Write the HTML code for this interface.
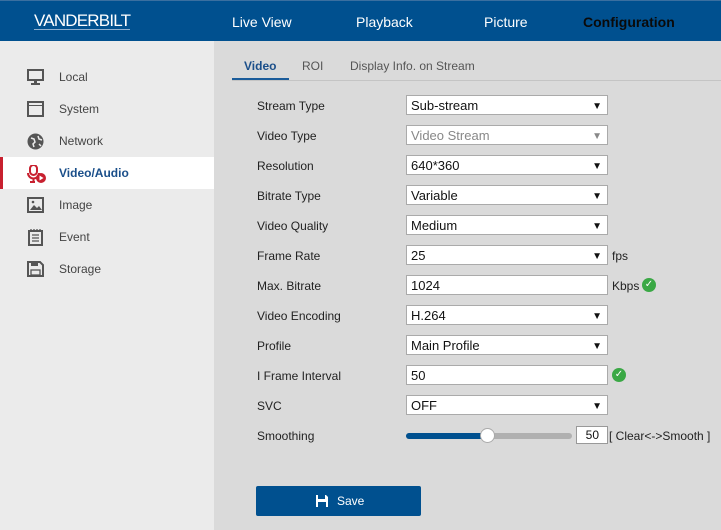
<!DOCTYPE html><html><head><style>
*{box-sizing:border-box;margin:0;padding:0}
body{width:721px;height:530px;overflow:hidden;font-family:"Liberation Sans",sans-serif;background:#dadada;position:relative;font-size:12px;color:#333}
.hdr{position:absolute;left:0;top:0;width:721px;height:41px;background:#00508f;border-top:1px solid #3a6fa0}
.logo{position:absolute;left:34px;top:11px;color:#fff;font-size:17px;letter-spacing:-0.8px;border-bottom:1px solid #8fb0d0;line-height:17px}
.nav{position:absolute;top:13px;color:#fff;font-size:14px}
.side{position:absolute;left:0;top:41px;width:214px;height:489px;background:#ebebeb}
.item{position:absolute;left:0;width:214px;height:32px;line-height:32px;padding-left:59px;font-size:12px;color:#444}
.item svg{position:absolute;left:27px;top:8px}
.act{background:#fff;color:#1b4f8a;font-weight:bold;border-left:3px solid #c8202f;padding-left:56px}
.act svg{left:24px}
.tabs{position:absolute;left:232px;top:80px;width:489px;border-top:1px solid #c4c4c4}
.tab{position:absolute;top:59px;font-size:12px;color:#555}
.lbl{position:absolute;left:257px;font-size:12px;color:#222}
.box{position:absolute;left:406px;width:202px;height:20px;background:#fff;border:1px solid #aaa;font-size:13px;line-height:20px;padding-left:4px;color:#111}
.box .ar{position:absolute;right:5px;top:1px;font-size:10px}
.unit{position:absolute;left:612px;font-size:12px;color:#222}
.ok{position:absolute;width:14px;height:14px;border-radius:50%;background:#3aa845;color:#fff;font-size:10px;line-height:14px;text-align:center}
</style></head><body>
<div class="hdr"><div class="logo">VANDERBILT</div>
<div class="nav" style="left:232px">Live View</div><div class="nav" style="left:356px">Playback</div><div class="nav" style="left:484px">Picture</div><div class="nav" style="left:583px;font-weight:bold;color:#0a0a0a">Configuration</div></div>
<div class="side">
<div class="item" style="top:20px"><svg width="17" height="16"><rect x="1" y="1" width="15" height="10" fill="none" stroke="#555" stroke-width="2"/><rect x="7" y="11" width="3" height="3" fill="#555"/><rect x="4" y="14" width="9" height="2" fill="#555"/></svg>Local</div>
<div class="item" style="top:52px"><svg width="17" height="16"><rect x="1" y="1" width="15" height="14" fill="none" stroke="#555" stroke-width="2"/><rect x="1" y="4" width="15" height="1" fill="#555"/></svg>System</div>
<div class="item" style="top:84px"><svg width="17" height="17"><circle cx="8.5" cy="8.5" r="8" fill="#555"/><path d="M4 5l3 1 1 3-2 2 1 3M11 3l1 3 3 1M12 11l2 2" stroke="#ebebeb" stroke-width="1.5" fill="none"/></svg>Network</div>
<div class="item act" style="top:116px"><svg width="20" height="18"><rect x="3" y="0" width="7" height="10" rx="3.5" fill="none" stroke="#c8202f" stroke-width="2"/><path d="M1 8a5.5 5.5 0 0 0 11 0M6.5 14v3M3 17h5" stroke="#c8202f" stroke-width="2" fill="none"/><circle cx="14" cy="13" r="5" fill="#c8202f"/><path d="M12.5 10.5l4 2.5-4 2.5z" fill="#fff"/></svg>Video/Audio</div>
<div class="item" style="top:148px"><svg width="17" height="16"><rect x="1" y="1" width="15" height="14" fill="none" stroke="#555" stroke-width="2"/><path d="M3 13l4-5 3 3 2-2 3 4z" fill="#555"/><circle cx="6" cy="5" r="1.3" fill="#555"/></svg>Image</div>
<div class="item" style="top:180px"><svg width="17" height="17"><rect x="2" y="2" width="13" height="14" fill="none" stroke="#555" stroke-width="2"/><path d="M5 6h7M5 9h7M5 12h7M4 0v3M7 0v3M10 0v3M13 0v3" stroke="#555" stroke-width="1.3"/></svg>Event</div>
<div class="item" style="top:212px"><svg width="17" height="16"><path d="M1 1h12l3 3v11H1z" fill="none" stroke="#555" stroke-width="2"/><rect x="4" y="1" width="7" height="4" fill="#555"/><rect x="4" y="9" width="9" height="5" fill="none" stroke="#555" stroke-width="1.3"/></svg>Storage</div>
</div>
<div class="tabs"></div>
<div class="tab" style="left:244px;color:#1b4f8a;font-weight:bold">Video</div>
<div style="position:absolute;left:232px;top:78px;width:57px;height:2px;background:#1b5c9a"></div>
<div class="tab" style="left:302px">ROI</div>
<div class="tab" style="left:350px">Display Info. on Stream</div>

<div class="lbl" style="top:99px">Stream Type</div><div class="box" style="top:95px">Sub-stream<span class="ar">▼</span></div>
<div class="lbl" style="top:129px">Video Type</div><div class="box" style="top:125px;color:#888">Video Stream<span class="ar" style="color:#888">▼</span></div>
<div class="lbl" style="top:159px">Resolution</div><div class="box" style="top:155px">640*360<span class="ar">▼</span></div>
<div class="lbl" style="top:189px">Bitrate Type</div><div class="box" style="top:185px">Variable<span class="ar">▼</span></div>
<div class="lbl" style="top:219px">Video Quality</div><div class="box" style="top:215px">Medium<span class="ar">▼</span></div>
<div class="lbl" style="top:249px">Frame Rate</div><div class="box" style="top:245px">25<span class="ar">▼</span></div><div class="unit" style="top:249px">fps</div>
<div class="lbl" style="top:279px">Max. Bitrate</div><div class="box" style="top:275px">1024</div><div class="unit" style="top:279px">Kbps</div><div class="ok" style="left:642px;top:278px">✓</div>
<div class="lbl" style="top:309px">Video Encoding</div><div class="box" style="top:305px">H.264<span class="ar">▼</span></div>
<div class="lbl" style="top:339px">Profile</div><div class="box" style="top:335px">Main Profile<span class="ar">▼</span></div>
<div class="lbl" style="top:369px">I Frame Interval</div><div class="box" style="top:365px">50</div><div class="ok" style="left:612px;top:368px">✓</div>
<div class="lbl" style="top:399px">SVC</div><div class="box" style="top:395px">OFF<span class="ar">▼</span></div>
<div class="lbl" style="top:429px">Smoothing</div>
<div style="position:absolute;left:406px;top:433px;width:166px;height:6px;border-radius:3px;background:#b0b0b0"></div>
<div style="position:absolute;left:406px;top:433px;width:82px;height:6px;border-radius:3px;background:#00508f"></div>
<div style="position:absolute;left:480px;top:428px;width:15px;height:15px;border-radius:50%;background:#fff;border:1px solid #aaa"></div>
<div style="position:absolute;left:576px;top:426px;width:32px;height:18px;background:#fff;border:1px solid #999;font-size:12px;text-align:right;padding-right:8px;line-height:16px;color:#111">50</div>
<div class="unit" style="left:609px;top:429px">[ Clear&lt;-&gt;Smooth ]</div>
<div style="position:absolute;left:256px;top:486px;width:165px;height:30px;background:#00508f;border-radius:2px;color:#fff;font-size:12px;line-height:30px;padding-left:81px"><svg style="position:absolute;left:59px;top:8px" width="14" height="14"><path d="M1 1h10l2 2v10H1z" fill="#fff"/><rect x="3" y="1" width="7" height="4" fill="#00508f"/><rect x="3" y="8" width="8" height="5" fill="#00508f"/></svg>Save</div>
</body></html>
